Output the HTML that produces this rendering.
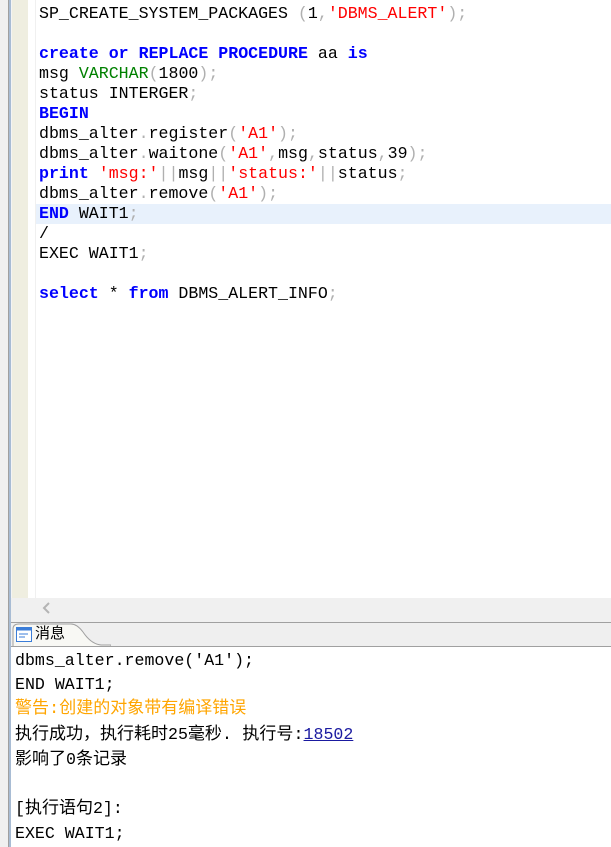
<!DOCTYPE html>
<html><head><meta charset="utf-8"><style>
*{margin:0;padding:0;box-sizing:border-box}
body{width:611px;height:847px;overflow:hidden;background:#fff;position:relative;font-family:"Liberation Mono","Noto Sans CJK SC",monospace;}
.abs{position:absolute}
.code{position:absolute;left:39px;top:4px;font-size:16.6px;line-height:20px;color:#000;white-space:pre;font-family:"Liberation Mono","Courier New",monospace}
.k{color:#0000ff;font-weight:bold}
.g{color:#008000}
.s{color:#ff0000}
.p{color:#b0b0b0}
.out{position:absolute;left:15px;top:649px;font-size:16.6px;line-height:24.2px;white-space:pre;color:#000}
.cjk{font-family:"Liberation Mono","Noto Sans CJK SC",monospace;font-size:17px}
</style></head><body>
<div class="abs" style="left:0;top:0;width:8px;height:847px;background:#f0f0f0"></div>
<div class="abs" style="left:8px;top:0;width:1px;height:847px;background:#a0a0a0"></div>
<div class="abs" style="left:9px;top:0;width:2px;height:847px;background:#a8bcd4"></div>
<div class="abs" style="left:11px;top:0;width:1px;height:598px;background:#f4f4f4"></div>
<div class="abs" style="left:12px;top:0;width:16px;height:598px;background:#efeee0"></div>
<div class="abs" style="left:35px;top:0;width:1px;height:598px;background:#f0f0f0"></div>
<div class="abs" style="left:36px;top:204px;width:575px;height:20px;background:#e8f1fc"></div>
<div class="code"><span>SP_CREATE_SYSTEM_PACKAGES <span class="p">(</span>1<span class="p">,</span><span class="s">'DBMS_ALERT'</span><span class="p">);</span></span>

<span class="k">create</span> <span class="k">or</span> <span class="k">REPLACE</span> <span class="k">PROCEDURE</span> aa <span class="k">is</span>
msg <span class="g">VARCHAR</span><span class="p">(</span>1800<span class="p">);</span>
status INTERGER<span class="p">;</span>
<span class="k">BEGIN</span>
dbms_alter<span class="p">.</span>register<span class="p">(</span><span class="s">'A1'</span><span class="p">);</span>
dbms_alter<span class="p">.</span>waitone<span class="p">(</span><span class="s">'A1'</span><span class="p">,</span>msg<span class="p">,</span>status<span class="p">,</span>39<span class="p">);</span>
<span class="k">print</span> <span class="s">'msg:'</span><span class="p">||</span>msg<span class="p">||</span><span class="s">'status:'</span><span class="p">||</span>status<span class="p">;</span>
dbms_alter<span class="p">.</span>remove<span class="p">(</span><span class="s">'A1'</span><span class="p">);</span>
<span class="k">END</span> WAIT1<span class="p">;</span>
/
EXEC WAIT1<span class="p">;</span>

<span class="k">select</span> * <span class="k">from</span> DBMS_ALERT_INFO<span class="p">;</span></div>
<div class="abs" style="left:11px;top:598px;width:600px;height:24px;background:#f0f0f0"></div>
<svg class="abs" style="left:40px;top:600px" width="14" height="16"><path d="M9 3 L4 8 L9 13" stroke="#b4b4b4" stroke-width="2" fill="none"/></svg>
<div class="abs" style="left:11px;top:622px;width:600px;height:1px;background:#a0a0a0"></div>
<div class="abs" style="left:11px;top:623px;width:600px;height:23px;background:#efefef"></div>
<svg class="abs" style="left:11px;top:622px" width="100" height="25"><path d="M2 25 L2 7 Q2 2 8 2 L60 2 Q66 2 72 10 Q80 22 90 23 L100 23 L100 25 Z" fill="#f8f8f4" stroke="#a0a0a0" stroke-width="1"/></svg>
<div class="abs" style="left:11px;top:646px;width:600px;height:1px;background:#a0a0a0"></div>
<svg class="abs" style="left:16px;top:627px" width="16" height="15"><rect x="0.5" y="0.5" width="15" height="14" fill="#fff" stroke="#3b7dd8"/><rect x="0.5" y="0.5" width="15" height="3" fill="#3b7dd8"/><path d="M3 7H12M3 10H9" stroke="#3b7dd8"/></svg>
<div class="abs cjk" style="left:35px;top:624px;font-size:15px;line-height:22px;color:#000">消息</div>
<div class="out">dbms_alter.remove('A1');
END WAIT1;
<span class="cjk" style="color:#ffa500">警告:创建的对象带有编译错误</span>
<span class="cjk">执行成功，执行耗时</span>25<span class="cjk">毫秒. 执行号:</span><span style="color:#1a1aa0;text-decoration:underline">18502</span>
<span class="cjk">影响了</span>0<span class="cjk">条记录</span>

[<span class="cjk">执行语句</span>2]:
EXEC WAIT1;</div>
</body></html>
